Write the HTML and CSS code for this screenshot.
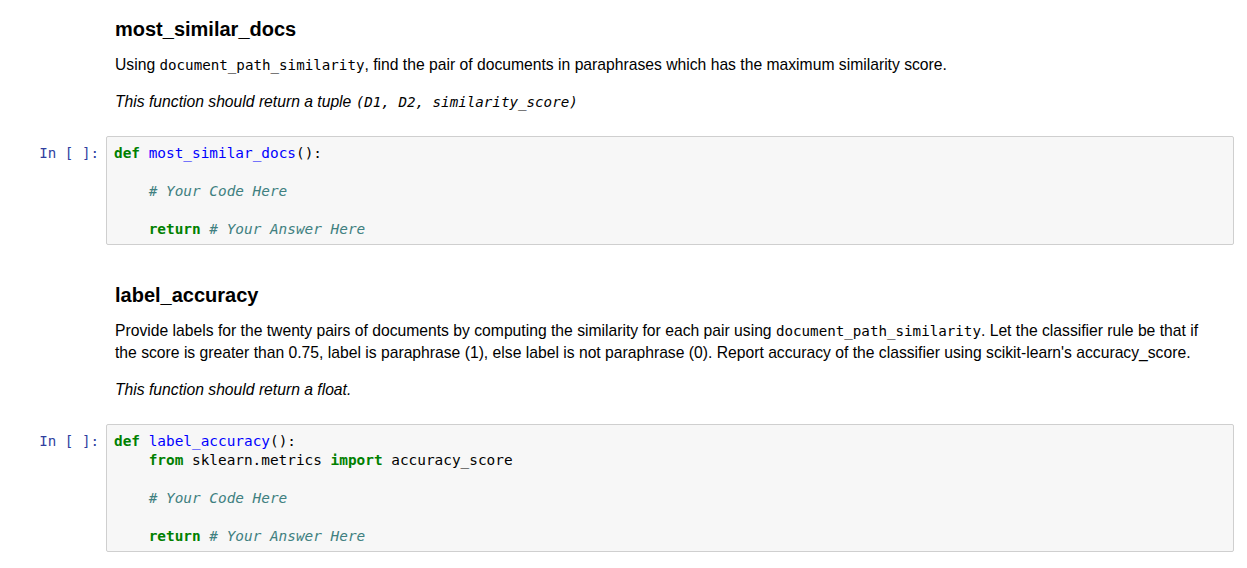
FILE: index.html
```html
<!DOCTYPE html>
<html lang="en">
<head>
<meta charset="utf-8">
<title>Notebook</title>
<link rel="stylesheet" href="styles.css">
</head>
<body>
<div class="notebook">
  <div class="cell text-cell">
    <div class="prompt"></div>
    <div class="rendered">
      <h3>most_similar_docs</h3>
      <p>Using <code>document_path_similarity</code>, find the pair of documents in paraphrases which has the maximum similarity score.</p>
      <p><em>This function should return a tuple <code>(D1, D2, similarity_score)</code></em></p>
    </div>
  </div>
  <div class="cell code-cell">
    <div class="prompt">In [ ]:</div>
    <div class="input-area"><pre><span class="kw">def</span> <span class="fn">most_similar_docs</span>():

    <span class="cm"># Your Code Here</span>

    <span class="kw">return</span> <span class="cm"># Your Answer Here</span></pre></div>
  </div>
  <div class="cell text-cell">
    <div class="prompt"></div>
    <div class="rendered">
      <h3>label_accuracy</h3>
      <p>Provide labels for the twenty pairs of documents by computing the similarity for each pair using <code>document_path_similarity</code>. Let the classifier rule be that if the score is greater than 0.75, label is paraphrase (1), else label is not paraphrase (0). Report accuracy of the classifier using scikit-learn's accuracy_score.</p>
      <p><em>This function should return a float.</em></p>
    </div>
  </div>
  <div class="cell code-cell">
    <div class="prompt">In [ ]:</div>
    <div class="input-area"><pre><span class="kw">def</span> <span class="fn">label_accuracy</span>():
    <span class="kw">from</span> sklearn.metrics <span class="kw">import</span> accuracy_score

    <span class="cm"># Your Code Here</span>

    <span class="kw">return</span> <span class="cm"># Your Answer Here</span></pre></div>
  </div>
</div>
</body>
</html>
```

FILE: styles.css
```css
html, body {
  margin: 0;
  padding: 0;
  background: #ffffff;
}

body {
  font-family: "Liberation Sans", Arial, sans-serif;
  font-size: 15.7px;
  color: #000000;
}

.notebook {
  display: flex;
  flex-direction: column;
  width: 1247px;
}

.cell {
  display: flex;
  flex-direction: row;
  align-items: flex-start;
}

.prompt {
  flex: 0 0 106px;
  box-sizing: border-box;
  padding-right: 7px;
  text-align: right;
  font-family: "DejaVu Sans Mono", "Liberation Mono", monospace;
  font-size: 14.2px;
  line-height: 19px;
  color: #303f9f;
  white-space: pre;
}

.text-cell {
  padding-top: 17px;
  padding-bottom: 23px;
}

.rendered {
  flex: 1 1 auto;
  margin-right: 13px;
  padding-left: 9px;
  padding-right: 15px;
}

.rendered h3 {
  margin: 0 0 13px 0;
  font-size: 20px;
  line-height: 24px;
  font-weight: bold;
}

.rendered p {
  margin: 0 0 15px 0;
  line-height: 22px;
}

.rendered p:last-child {
  margin-bottom: 0;
}

.rendered code {
  font-family: "DejaVu Sans Mono", "Liberation Mono", monospace;
  font-size: 14.2px;
}

.code-cell {
  margin-bottom: 21px;
}

.code-cell .prompt {
  padding-top: 8px;
}

.input-area {
  flex: 1 1 auto;
  margin-right: 13px;
  background: #f7f7f7;
  border: 1px solid #cfcfcf;
  border-radius: 2px;
  padding: 7px 7px 5px 7px;
}

.input-area pre {
  margin: 0;
  font-family: "DejaVu Sans Mono", "Liberation Mono", monospace;
  font-size: 14.4px;
  line-height: 19px;
  color: #000000;
}

.kw {
  color: #008000;
  font-weight: bold;
}

.fn {
  color: #0000ff;
}

.cm {
  color: #408080;
  font-style: italic;
}
```
